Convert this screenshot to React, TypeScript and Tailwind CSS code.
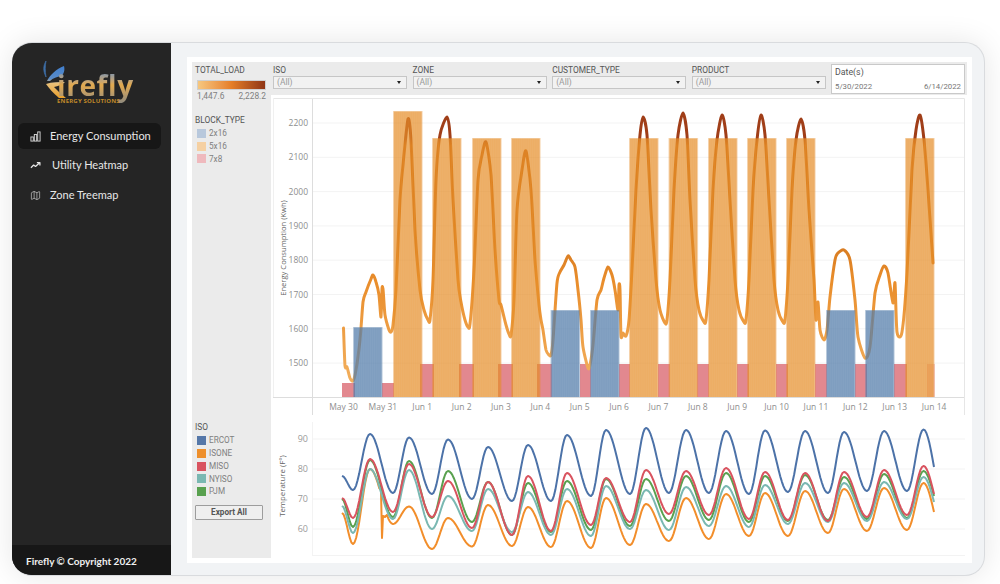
import React from "react";
import { Map as MapIcon } from "lucide-react";

type P = [number, number];

const loadLine: P[] = [[343.5,328],[345,366],[347,367],[350,378],[353,381],[356,370],[360,340],[363,302],[366,292],[371,279],[373,275],[376,282],[379,295],[381,317],[382,289],[383,289],[385,315],[389,330],[391,332],[393,325],[396,290],[400,200],[403,165],[408,119],[411,140],[415,230],[420,290],[424,310],[428,320],[430,320],[433,280],[436,180],[440,135],[447,117],[450,135],[453,200],[458,280],[461,302],[465,320],[468,327],[470,324],[474,270],[478,180],[482,155],[486,142],[491,175],[495,250],[499,300],[501,305],[506,325],[509,334],[511,335],[514,300],[517,210],[522,170],[526,151],[531,190],[535,260],[539,305],[541,320],[543,330],[546,350],[549,355],[551,355],[553,340],[557,283],[560,272],[564,265],[568,256],[571,260],[575,267],[578,290],[581,320],[583,347],[588,368],[590,365],[593,345],[597,300],[601,290],[604,278],[608,267],[612,275],[615,290],[618,310],[619,285],[620,290],[621,336],[623,333],[626,336],[629,320],[632,270],[636,190],[640,135],[643,117],[647,135],[651,210],[656,280],[660,310],[665,323],[667,320],[670,280],[674,190],[678,135],[683,113],[687,135],[690,200],[695,280],[699,310],[704,322],[706,320],[709,280],[713,190],[717,140],[722,115],[726,135],[730,200],[735,280],[739,310],[744,322],[746,320],[749,280],[753,190],[757,140],[761,115],[765,135],[769,200],[774,280],[778,310],[783,322],[785,320],[788,280],[792,190],[796,140],[801,119],[805,140],[809,210],[814,280],[816,320],[818,302],[820,330],[824,340],[827,330],[830,297],[835,260],[838,253],[844,250],[850,260],[855,300],[858,337],[865,358],[870,347],[875,293],[880,275],[884,266],[888,273],[893,303],[895,283],[897,332],[902,332],[907,273],[912,170],[916,130],[920,115],[924,140],[928,190],[933,263]];

const toSmooth = (pts: P[]) => {
  let d = `M${pts[0][0]} ${pts[0][1]}`;
  for (let i = 0; i < pts.length - 1; i++) {
    const a = pts[Math.max(i - 1, 0)], b = pts[i], c = pts[i + 1], e = pts[Math.min(i + 2, pts.length - 1)];
    const k = 8;
    d += `C${(b[0] + (c[0] - a[0]) / k).toFixed(1)} ${(b[1] + (c[1] - a[1]) / k).toFixed(1)} ${(c[0] - (e[0] - b[0]) / k).toFixed(1)} ${(c[1] - (e[1] - b[1]) / k).toFixed(1)} ${c[0]} ${c[1]}`;
  }
  return d;
};

const VAL_X = [353,393,432,472,512,551,591,630,669,709,749,788,828,867,907];
const PEAK_X = [370,409,448,488,528,567,606,646,686,726,765,805,844,884,923.5];

const wave = (start: number, valleys: number[], peaks: number[], end: number, extra: P[] = []) => {
  const knots: P[] = [[342, start]];
  valleys.forEach((v, i) => { knots.push([VAL_X[i], v]); knots.push([PEAK_X[i], peaks[i]]); });
  knots.push([934, end]);
  const out: P[] = [];
  for (let i = 0; i < knots.length - 1; i++) {
    const [x0, y0] = knots[i], [x1, y1] = knots[i + 1];
    const n = Math.max(4, Math.round((x1 - x0) / 1.5));
    const last = i === knots.length - 2;
    for (let j = 0; j < n; j++) {
      const t = j / n;
      const s = last ? (1 - Math.cos((t * Math.PI) / 2)) : (1 - Math.cos(t * Math.PI)) / 2;
      out.push([+(x0 + (x1 - x0) * t).toFixed(1), +(y0 + (y1 - y0) * s).toFixed(1)]);
    }
  }
  out.push([934, end]);
  const merged = out.filter(p => !extra.some(e => Math.abs(e[0] - p[0]) < 1.2)).concat(extra).sort((a, b) => a[0] - b[0]);
  return merged.map((p, i) => `${i ? "L" : "M"}${p[0]} ${p[1]}`).join("");
};

const tempLines = [
  { c: "#f28e2b", d: wave(513, [544,524,549,546.5,546,547,548,545,541,539,536,536,533,531,530], [469,506.5,518,505,507,501,498,504,498,494,493,491,489,488,483], 512, [[381,490],[382,538],[383,516],[385,517]]) },
  { c: "#59a14f", d: wave(499, [527,517,518,522,535,532,530,526,521,520,522,521,520,519,518], [460,461,471,482,483,481,479,479,476,473,476,475,477,474,471], 496) },
  { c: "#7ab8b2", d: wave(506, [533,519,529,531,532,535,536,529,530,526,527,524,522,521,519], [469,470,496,489,492,489,486,490,487,486,485,483,483,482,477], 502) },
  { c: "#d9535f", d: wave(498, [518,512,517,528,535,531,525,522,514,515,519,520,521,517,515], [459,464,481,482,476,473,478,470,471,468,472,473,472,470,466], 494) },
  { c: "#4c72a8", d: wave(476, [490,493,494,499,501,501,496,494,493,493,494,492,493,491,491], [434,437.5,439.5,447,445,435,430,428,430,431,430.5,431,432,431,429.5], 467) },
];

const hours = Array.from({ length: 16 }, (_, i) => i);
const orange: [number, number][] = [[393,111],[432,138],[472,138],[511,138],[629,138],[668.5,138],[708,138],[747,138],[786,138],[905,138]];
const blue: [number, number][] = [[353,327],[550.5,310],[590,310],[826,310],[865,310]];
const red: [number, number, number, number][] = [[342,355,383,0.7],[382,394,383,0.7],[420,434,364,0.7],[459,474,364,0.7],[498,513,364,0.7],[537,552,364,0.7],[580,591,364,0.7],[619,630,364,0.7],[658,670,364,0.7],[697,709,364,0.7],[737,749,364,0.7],[776,788,364,0.7],[815,827,364,0.7],[855,867,364,0.7],[894,907,364,0.7],[927,935,364,0.3]];

const xTicks = ["May 30","May 31","Jun 1","Jun 2","Jun 3","Jun 4","Jun 5","Jun 6","Jun 7","Jun 8","Jun 9","Jun 10","Jun 11","Jun 12","Jun 13","Jun 14"];
const yTicks = [2200,2100,2000,1900,1800,1700,1600,1500];

const StackedBar = ({ x, top, fill, opacity }: { x: number; top: number; fill: string; opacity: number }) => (
  <g>
    <rect x={x + 0.8} y={top + 0.4} width={28} height={396.6 - top} fill={fill} fillOpacity={opacity} />
    <rect x={x} y={top} width={0.8} height={397 - top} fill={fill} fillOpacity={opacity * 0.5} />
    <rect x={x + 28.8} y={top} width={0.8} height={397 - top} fill={fill} fillOpacity={opacity * 0.5} />
    <rect x={x + 0.8} y={top} width={28} height={0.4} fill={fill} fillOpacity={opacity * 0.5} />
    {hours.map(h => (
      <rect key={h} x={x + (h * 29.6) / 16 + 0.7} y={top + 0.4} width={0.7} height={396.6 - top} fill="#ffffff" fillOpacity={0.05} />
    ))}
  </g>
);

const LoadChart = () => (
  <svg viewBox="273 98 692 318" width={692} height={318} className="block shrink-0" fontFamily="'Open Sans', sans-serif">
    <defs>
      <linearGradient id="loadGrad" gradientUnits="userSpaceOnUse" x1="0" y1="110" x2="0" y2="385">
        <stop offset="0.1" stopColor="#a03e18" />
        <stop offset="0.13" stopColor="#c9691b" />
        <stop offset="0.5" stopColor="#d87c22" />
        <stop offset="0.62" stopColor="#e98d2b" />
        <stop offset="1" stopColor="#f2b05f" />
      </linearGradient>
    </defs>
    {yTicks.map((t, i) => {
      const y = 123 + i * 34.3;
      return (
        <g key={t}>
          <line x1={312} x2={964} y1={y} y2={y} stroke="#f3f3f3" />
          <text x={308} y={y + 3} textAnchor="end" fontSize={8.5} fill="#8e8e8e">{t}</text>
        </g>
      );
    })}
    <path d="M273.5 98.5H964.5V415" fill="none" stroke="#e6e6e6" />
    <line x1={273.5} x2={273.5} y1={98} y2={397} stroke="#f0f0f0" />
    <line x1={312.5} x2={312.5} y1={99} y2={415} stroke="#dddddd" />
    <line x1={273} x2={964} y1={397.5} y2={397.5} stroke="#dddddd" />
    <text transform="translate(286,248) rotate(-90)" textAnchor="middle" fontSize={7.6} fill="#666666">Energy Consumption (Kwh)</text>
    {red.map(([a, b, top, o]) => (
      <rect key={a} x={a} y={top} width={b - a} height={397 - top} fill="#d6565f" fillOpacity={o} />
    ))}
    <path d={toSmooth(loadLine)} fill="none" stroke="url(#loadGrad)" strokeWidth={3} strokeLinejoin="round" strokeLinecap="round" />
    {blue.map(([x, top]) => <StackedBar key={x} x={x} top={top} fill="#4e79a7" opacity={0.72} />)}
    {orange.map(([x, top]) => <StackedBar key={x} x={x} top={top} fill="#e58b24" opacity={0.7} />)}
    {xTicks.map((t, i) => (
      <text key={t} x={343.5 + i * 39.37} y={410} textAnchor="middle" fontSize={8.5} fill="#8e8e8e">{t}</text>
    ))}
  </svg>
);

const TempChart = () => (
  <svg viewBox="273 416 694 142" width={694} height={142} className="block shrink-0" fontFamily="'Open Sans', sans-serif">
    {[90,80,70,60].map((t, i) => {
      const y = 439 + i * 30;
      return (
        <g key={t}>
          <line x1={312} x2={965} y1={y} y2={y} stroke="#f3f3f3" />
          <text x={308} y={y + 3} textAnchor="end" fontSize={9} fill="#9a9a9a">{t}</text>
        </g>
      );
    })}
    <line x1={312} x2={965} y1={555.5} y2={555.5} stroke="#f3f3f3" />
    <line x1={312.5} x2={312.5} y1={422} y2={556} stroke="#f3f3f3" />
    <text transform="translate(285,486) rotate(-90)" textAnchor="middle" fontSize={7.8} fill="#666666">Temperature (F°)</text>
    {tempLines.map(l => (
      <path key={l.c} d={l.d} fill="none" stroke={l.c} strokeWidth={2} strokeLinejoin="round" />
    ))}
  </svg>
);

const Filter = ({ label }: { label: string }) => (
  <div className="w-[134px] flex flex-col">
    <div className="text-[8.4px] leading-[11px] text-[#555] pt-[3px] font-['Roboto',sans-serif]">{label}</div>
    <div className="h-[13px] flex items-center justify-between px-[3px] bg-[#f2f2f2] border border-[#c6c6c6] text-[8.5px] text-[#9a9a9a] font-['Roboto',sans-serif]">
      <span>(All)</span>
      <span className="w-0 h-0 border-l-[2.5px] border-r-[2.5px] border-t-[3px] border-l-transparent border-r-transparent border-t-[#222] mr-[2px]" />
    </div>
  </div>
);

const Swatch = ({ color, label }: { color: string; label: string }) => (
  <div className="flex items-center h-[12.8px] pl-[2px] gap-[3px]">
    <span className="w-[9px] h-[9px] shrink-0" style={{ backgroundColor: color }} />
    <span className="text-[8.2px] text-[#808080] font-['Roboto',sans-serif]">{label}</span>
  </div>
);

const Logo = () => (
  <div className="relative h-[60px] w-[100px]">
    <svg viewBox="0 0 34 44" width={34} height={44} className="absolute left-0 top-0">
      <defs>
        <linearGradient id="wingGrad" gradientUnits="userSpaceOnUse" x1="0" y1="8" x2="0" y2="41">
          <stop offset="0" stopColor="#3f7fd0" />
          <stop offset="0.42" stopColor="#5a8cc8" />
          <stop offset="0.55" stopColor="#e9c07a" />
          <stop offset="1" stopColor="#e9a02c" />
        </linearGradient>
      </defs>
      <path d="M6 4 C3 9 3 14 6 20 C5 14 5 9 6 4Z" fill="#3d6fa8" stroke="#3d6fa8" strokeWidth="0.7" />
      <path d="M7 24 C10 18 16 12 24 9 C25 13 24 17 21 19 C17 20 13 21 10 24Z" fill="url(#wingGrad)" />
      <path d="M6 27 C12 25 18 25 25 25 C22 28 18 29 14 30 C18 34 22 38 26 41 L19 41 C13 36 9 31 6 27Z" fill="url(#wingGrad)" />
    </svg>
    <div className="absolute left-[17px] top-[10px] text-[28px] leading-[36px] font-bold tracking-[0.6px] font-['Open_Sans',sans-serif] bg-gradient-to-b from-[#4f86c6] via-[#e3a94b] to-[#8f8a7c] bg-clip-text text-transparent">
      irefly
    </div>
    <div className="absolute left-[17px] top-[40px] text-[6px] leading-[8px] font-bold tracking-[0.2px] text-[#c08a2a] whitespace-nowrap font-['Open_Sans',sans-serif]">
      ENERGY SOLUTIONS
    </div>
  </div>
);

const BarsIcon = () => (
  <svg viewBox="0 0 12 12" width={11} height={11} fill="none" stroke="#d8d8d8" strokeWidth="1">
    <rect x="1" y="6.5" width="2.6" height="4.5" />
    <rect x="4.7" y="3.8" width="2.6" height="7.2" />
    <rect x="8.4" y="1" width="2.6" height="10" />
  </svg>
);

const TrendIcon = () => (
  <svg viewBox="0 0 12 12" width={11} height={11} fill="none" stroke="#e6e6e6" strokeWidth="1.4" strokeLinejoin="round">
    <path d="M1 8.5 L4 5.5 L6 7 L10.5 3" />
    <path d="M7.5 2.8 H10.8 V6" />
  </svg>
);

export default function App() {
  return (
    <div className="w-[1000px] h-[584px] overflow-hidden bg-white pt-[42px] pl-[12px] font-['Lato',sans-serif]">
      <div className="w-[973px] h-[534px] flex rounded-[20px] overflow-hidden bg-[#f1f3f5] border-r border-b border-t border-[#d9dbde] shadow-[0_0_30px_rgba(0,0,0,0.10)]">
        <aside className="w-[159px] shrink-0 bg-[#252525] flex flex-col">
          <div className="pl-[28px] pt-[14px] h-[80px]">
            <Logo />
          </div>
          <nav className="flex flex-col pl-[6px] pr-[10px] text-[#e8e8e8] text-[11px]">
            <div className="h-[26px] rounded-[6px] bg-[#171717] flex items-center pl-[12px] gap-[9px]">
              <BarsIcon />
              <span>Energy Consumption</span>
            </div>
            <div className="h-[30px] mt-[1px] flex items-center pl-[12px] gap-[11px]">
              <TrendIcon />
              <span>Utility Heatmap</span>
            </div>
            <div className="h-[30px] flex items-center pl-[12px] gap-[9px]">
              <MapIcon size={11} strokeWidth={1.4} color="#d8d8d8" />
              <span>Zone Treemap</span>
            </div>
          </nav>
          <div className="mt-auto h-[30px] bg-[#171717] flex items-center pl-[14px] pt-[3px] text-[10px] font-bold text-[#f0f0f0]">
            Firefly © Copyright 2022
          </div>
        </aside>
        <main className="flex-1 pl-[16px] pr-[12px] pt-[14px] pb-[12px]">
          <div className="h-full bg-white p-[5px] flex">
            <div className="w-[79px] shrink-0 bg-[#ebebeb] flex flex-col pl-[3px] pt-[3px] pb-[38px] font-['Roboto',sans-serif]">
              <div className="text-[8.4px] leading-[11px] text-[#555]">TOTAL_LOAD</div>
              <div className="ml-[2px] mt-[4px] w-[69px] h-[10px] border border-[#cfcfcf] bg-gradient-to-r from-[#f6c77f] via-[#e57e26] to-[#8f3515]" />
              <div className="ml-[2px] w-[69px] flex justify-between text-[8.4px] leading-[12px] text-[#7f7f7f]">
                <span>1,447.6</span>
                <span>2,228.2</span>
              </div>
              <div className="text-[8.4px] leading-[11px] text-[#555] mt-[13px] mb-[1px]">BLOCK_TYPE</div>
              <Swatch color="#b8c8dc" label="2x16" />
              <Swatch color="#f5d0a2" label="5x16" />
              <Swatch color="#efb9bd" label="7x8" />
              <div className="mt-auto text-[8.4px] leading-[11px] text-[#555] mb-[1px]">ISO</div>
              <Swatch color="#5577a8" label="ERCOT" />
              <Swatch color="#ee8f2b" label="ISONE" />
              <Swatch color="#d9535f" label="MISO" />
              <Swatch color="#7ab8b2" label="NYISO" />
              <Swatch color="#59a14f" label="PJM" />
              <button className="mt-[7px] w-[68px] h-[15px] border border-[#9d9d9d] rounded-[1px] bg-[#efefef] text-[8.2px] font-bold text-[#555]">
                Export All
              </button>
            </div>
            <div className="flex-1 min-w-0 flex flex-col">
              <div className="h-[33px] bg-[#ebebeb] flex items-start pl-[2px] pr-[2px] shrink-0">
                <div className="flex gap-[5.6px]">
                  <Filter label="ISO" />
                  <Filter label="ZONE" />
                  <Filter label="CUSTOMER_TYPE" />
                  <Filter label="PRODUCT" />
                </div>
                <div className="ml-auto mt-[2px] w-[134px] h-[30px] bg-white border border-[#c9c9c9] px-[3px] flex flex-col justify-between font-['Roboto',sans-serif]">
                  <div className="text-[8.8px] leading-[14px] text-[#555]">Date(s)</div>
                  <div className="flex justify-between text-[7.8px] leading-[12px] text-[#777]">
                    <span>5/30/2022</span>
                    <span>6/14/2022</span>
                  </div>
                </div>
              </div>
              <div className="pl-[2px] pt-[3px]">
                <LoadChart />
                <TempChart />
              </div>
            </div>
          </div>
        </main>
      </div>
    </div>
  );
}
